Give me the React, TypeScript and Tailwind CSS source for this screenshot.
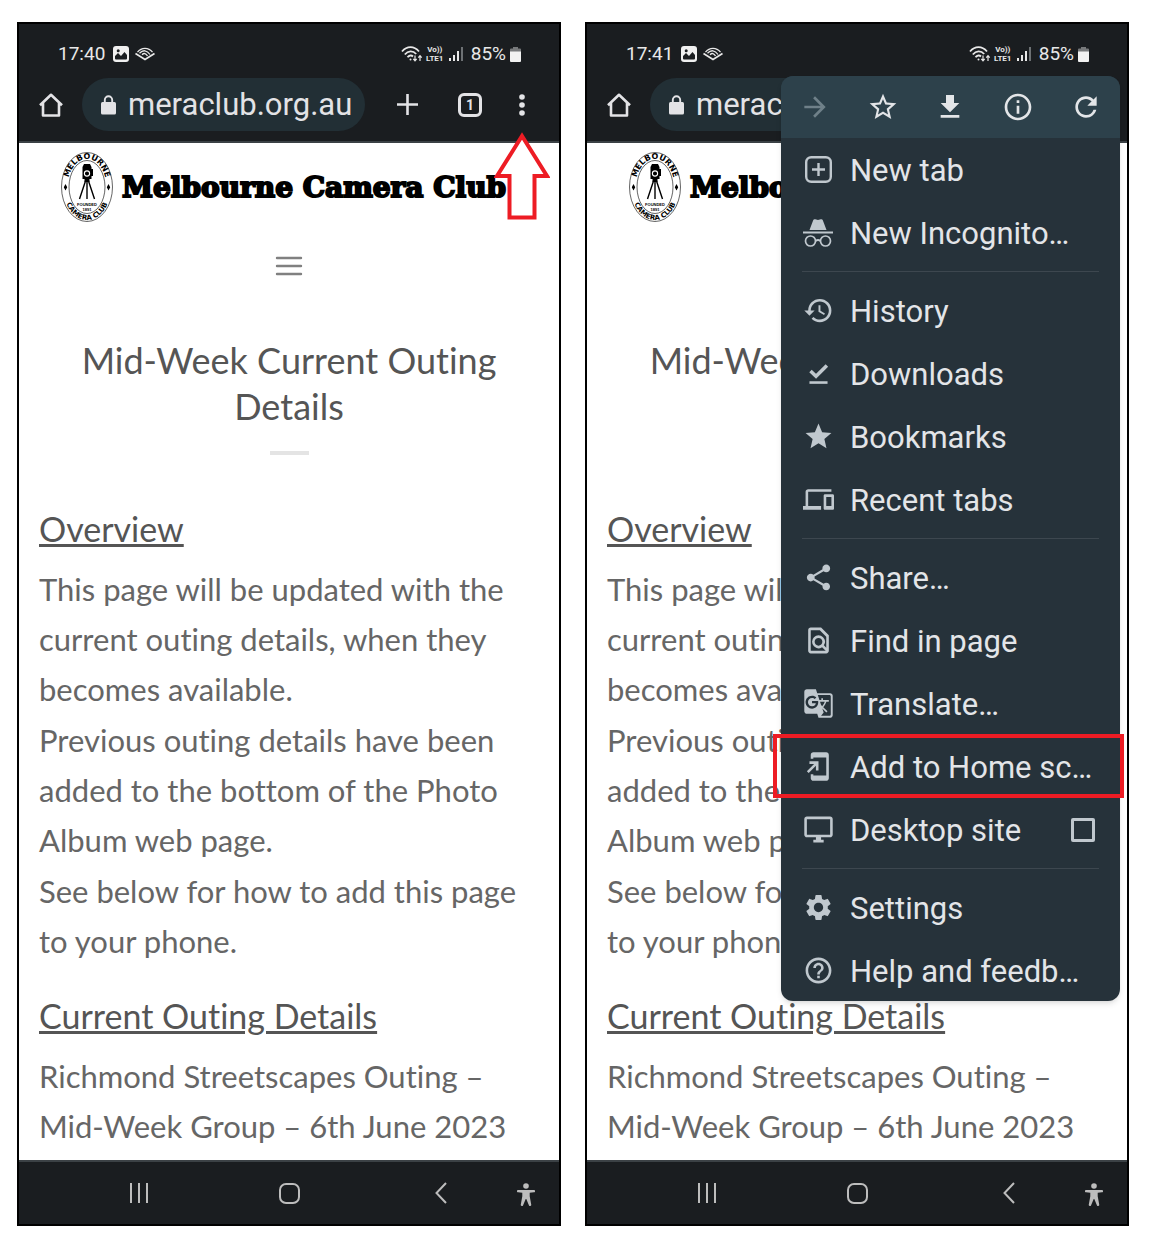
import { ReactNode, useId } from "react";
import {
    MdAddToHomeScreen,
    MdArrowForward,
    MdDevices,
    MdFileDownload,
    MdGTranslate,
    MdHelpOutline,
    MdHistory,
    MdInfoOutline,
    MdOutlineDesktopWindows,
    MdOutlineFindInPage,
    MdRefresh,
    MdSettings,
    MdShare,
    MdStar,
    MdStarBorder,
} from "react-icons/md";

export default function App() {
    return (
        <div className="grid grid-cols-2 gap-6 bg-white pt-[22px] pr-[35px] pb-7 pl-[17px]">
            <Phone time="17:40">
                <RedArrow />
            </Phone>
            <Phone time="17:41">
                <BrowserMenu />
            </Phone>
        </div>
    );
}

function Phone(phoneProps: IPhoneProps) {
    return (
        <section className="relative flex min-w-0 flex-col border-2 border-black bg-white">
            <header className="border-b-2 border-[#3b4145] bg-[#1a1d20] pb-[10px]">
                <StatusBar time={phoneProps.time} />
                <Toolbar />
            </header>
            <ClubPage />
            <NavBar />
            {phoneProps.children}
        </section>
    );
}

function StatusBar({ time }: { time: string }) {
    return (
        <div className="flex h-[54px] items-center pt-[6px] pr-[38px] pl-[39px] font-['Roboto',sans-serif] text-[19px] text-[#e8e8e8]">
            <span>{time}</span>
            {/* Picture notification */}
            <svg className="ml-2 h-4 w-4" viewBox="0 0 16 16">
                <rect width="16" height="16" rx="3" fill="#f0f0f0" />
                <path d="M2 12.500V10l3-3 3 3 3.500-4L14 9v3.500a1 1 0 0 1-1 1H3a1 1 0 0 1-1-1z" fill="#1a1d20" />
                <circle cx="5.200" cy="4.800" r="1.500" fill="#1a1d20" />
            </svg>
            {/* Audiobook notification */}
            <svg className="ml-1.5 h-[14px] w-5" viewBox="0 0 20 14" fill="none" stroke="#e8e8e8" strokeWidth="1.300">
                <path d="M.5 6.500 10 12.500l9.500-6" strokeWidth="1.700" />
                <path d="M2.500 5.200C6.500.2 13.500.2 17.500 5.200" />
                <path d="M4.500 6.300c3.500-3.800 7.500-3.300 10.500 1.200" />
                <path d="M7 7.700c2-2 4-1.500 5.500 1.300" />
            </svg>
            <svg className="ml-auto h-4 w-[22px]" viewBox="0 0 22 16" fill="none" stroke="#e8e8e8" strokeWidth="1.800">
                <path d="M1 5.500C6-.3 13-.3 18 5.500" />
                <path d="M3.800 8.500c3.300-4 8.200-4 11.400-.5" />
                <path d="M6.500 11.300c1.700-2.200 4-2.300 5.500-.8" />
                <circle cx="9.500" cy="13.500" r="1" fill="#e8e8e8" stroke="none" />
                <path d="M14 9.500v5M12.300 12.800l1.700 2 1.700-2M19 15v-5M17.300 11.700l1.700-2 1.700 2" strokeWidth="1.200" />
            </svg>
            <span className="ml-0.5 flex w-5 flex-col text-center text-[8px] leading-[9px] font-bold">
                <span>Vo))</span>
                <span>LTE1</span>
            </span>
            <svg className="ml-1 h-[14px] w-[14px]" viewBox="0 0 14 14" fill="#e8e8e8">
                <path d="M0 11h2v3H0zM4 8h2v6H4zM8 4h2v10H8z" />
                <path d="M12 0h2v14h-2z" fill="#6d7174" />
            </svg>
            <span className="ml-2">85%</span>
            <svg className="ml-1 h-[15px] w-[11px]" viewBox="0 0 11 15">
                <path d="M3 0h5v1.500h2a1 1 0 0 1 1 1V5H0V2.500a1 1 0 0 1 1-1h2z" fill="#77797b" />
                <path d="M0 4.500h11V14a1 1 0 0 1-1 1H1a1 1 0 0 1-1-1z" fill="#f2f2f2" />
            </svg>
        </div>
    );
}

function Toolbar() {
    return (
        <div className="flex items-center pr-[34px] pl-5 font-['Roboto',sans-serif] text-[#e3e3e6]">
            <button type="button" aria-label="Home">
                <svg className="h-6 w-6" viewBox="0 0 24 24" fill="none" stroke="currentColor" strokeWidth="2.600">
                    <path d="M1 12.200 12 1.800l11 10.400M4 9.800V22.500h16V9.800" strokeLinejoin="round" />
                </svg>
            </button>
            <button
                type="button"
                className="ml-[19px] flex h-[53px] min-w-0 flex-1 items-center overflow-hidden rounded-full bg-[#222f35] pl-[19px]"
            >
                <svg className="h-5 w-[15px] shrink-0" viewBox="0 0 15 20">
                    <path d="M3.800 9V5a3.700 3.700 0 0 1 7.400 0v4" fill="none" stroke="currentColor" strokeWidth="1.900" />
                    <rect y="7" width="15" height="12.500" rx="1.500" fill="currentColor" />
                </svg>
                <span className="ml-3 text-[31px] leading-[38px]">meraclub.org.au</span>
            </button>
            <button type="button" aria-label="New tab" className="ml-8">
                <svg className="h-[21px] w-[21px]" viewBox="0 0 21 21" stroke="currentColor" strokeWidth="2.600">
                    <path d="M10.500 0v21M0 10.500h21" />
                </svg>
            </button>
            <button
                type="button"
                aria-label="Tabs"
                className="ml-10 h-6 w-6 rounded-md border-[3px] border-current text-sm leading-[18px] font-bold"
            >
                1
            </button>
            <button type="button" aria-label="More" className="ml-[37px]">
                <svg className="h-[22px] w-1.5" viewBox="0 0 6 22" fill="currentColor">
                    <circle cx="3" cy="3" r="2.800" />
                    <circle cx="3" cy="11" r="2.800" />
                    <circle cx="3" cy="19" r="2.800" />
                </svg>
            </button>
        </div>
    );
}

function ClubPage() {
    return (
        <main className="px-5 pt-[9px] pb-[9px] font-['Lato',sans-serif] text-[31px] leading-[50px] text-[#666] [font-variant-ligatures:none]">
            <a href="#" className="ml-[22px] flex items-center gap-[9px] text-black">
                <ClubLogo />
                <span className="pt-0.5 font-['DejaVu_Serif',serif] text-[28px] leading-8 font-bold whitespace-nowrap [-webkit-text-stroke:2px_black]">
                    Melbourne Camera Club
                </span>
            </a>
            <button type="button" aria-label="Menu" className="mx-auto mt-[34px] block">
                <svg className="h-5 w-7" viewBox="0 0 28 20" stroke="#808080" strokeWidth="2.400" strokeLinecap="round">
                    <path d="M2 2h24M2 10h24M2 18h24" />
                </svg>
            </button>
            <h1 className="mt-[61px] text-center text-[36px] leading-[46px] text-[#555]">Mid-Week Current Outing Details</h1>
            <div className="mx-auto mt-[22px] h-1 w-[39px] bg-[#e4e4e4]"></div>
            <h2 className="mt-[49px] text-[34px] text-[#555] underline decoration-[3px]">Overview</h2>
            <div className="mt-[10px] flex flex-col gap-px">
                <p>This page will be updated with the current outing details, when they becomes available.</p>
                <p>Previous outing details have been added to the bottom of the Photo Album web page.</p>
                <p>See below for how to add this page to your phone.</p>
            </div>
            <h2 className="mt-[25px] text-[34px] text-[#555] underline decoration-[3px]">Current Outing Details</h2>
            <p className="mt-[10px]">Richmond Streetscapes Outing – Mid-Week Group – 6th June 2023</p>
        </main>
    );
}

function ClubLogo() {
    const id = useId();

    return (
        <svg className="h-[70px] w-[52px] shrink-0" viewBox="0 0 52 70" fontFamily="Liberation Sans, sans-serif">
            <ellipse cx="26" cy="35" rx="25.500" ry="34.500" fill="none" stroke="#222" strokeWidth=".7" />
            <ellipse cx="26" cy="35" rx="18" ry="26.500" fill="none" stroke="#222" strokeWidth=".7" />
            <path id={id + "top"} d="M6.500 35a19.500 28 0 0 1 39 0" fill="none" />
            <path id={id + "bottom"} d="M2 35a24 33 0 0 0 48 0" fill="none" />
            <text fontSize="8" fontFamily="DejaVu Sans" fontWeight="bold" textAnchor="middle">
                <textPath href={"#" + id + "top"} startOffset="50%">
                    MELBOURNE
                </textPath>
            </text>
            <text fontSize="7" fontFamily="DejaVu Sans" fontWeight="bold" textAnchor="middle">
                <textPath href={"#" + id + "bottom"} startOffset="50%">
                    CAMERA CLUB
                </textPath>
            </text>
            <path d="m4.500 32 1.700 3.200-1.700 3.200-1.700-3.200zM47.500 32l1.700 3.200-1.700 3.200-1.700-3.200z" />
            {/* Camera on its tripod */}
            <path d="M23 12h6l1.500 3v2h1.500v7h-1.500v3h-9V15z" />
            <circle cx="26" cy="21.500" r="2.600" stroke="#fff" strokeWidth="1.100" />
            <path d="M23.500 27h5v3h-5z" />
            <path d="M24.500 29 18.500 47M26 29v18M27.500 29l6 18" stroke="#000" strokeWidth="1.400" />
            <text x="26" y="53.500" fontSize="4" fontWeight="bold" textAnchor="middle">
                FOUNDED
            </text>
            <text x="26" y="58.500" fontSize="4" fontWeight="bold" textAnchor="middle">
                1891
            </text>
        </svg>
    );
}

function NavBar() {
    return (
        <nav className="flex h-16 border-t-2 border-[#3b4145] bg-[#1a1d20] pl-11 text-[#bdbdbd]">
            <button type="button" aria-label="Recents" className="flex flex-1 items-center justify-center">
                <svg className="h-5 w-5" viewBox="0 0 20 20" stroke="currentColor" strokeWidth="2">
                    <path d="M2 0v20M10 0v20M18 0v20" />
                </svg>
            </button>
            <button type="button" aria-label="Home" className="flex flex-1 items-center justify-center">
                <span className="h-[21px] w-[21px] rounded-[7px] border-2 border-current"></span>
            </button>
            <button type="button" aria-label="Back" className="flex flex-1 items-center justify-center">
                <svg className="h-[22px] w-3" viewBox="0 0 12 22" fill="none" stroke="currentColor" strokeWidth="2">
                    <path d="M11 1 1.500 11 11 21" />
                </svg>
            </button>
            <button type="button" aria-label="Accessibility" className="flex w-[42px] items-center">
                <svg className="mt-0.5 h-[23px] w-[18px]" viewBox="0 0 18 23" fill="currentColor">
                    <circle cx="9" cy="3" r="2.800" />
                    <path d="M1 7h16a1 1 0 0 1 0 2.200l-4.300.6v3.400L14.200 21.500a1.200 1.200 0 0 1-2.300.7L9.300 16h-.6L6.100 22.200a1.200 1.200 0 0 1-2.300-.7l1.500-8.300V9.800L1 9.200A1 1 0 0 1 1 7z" />
                </svg>
            </button>
        </nav>
    );
}

function RedArrow() {
    return (
        <svg className="absolute top-[108px] right-[9px] h-[90px] w-[56px]" viewBox="0 0 56 90">
            <path
                d="M28 4 53 44H40.500V85.500H15.500V44H3z"
                fill="#fff"
                stroke="#ed1c24"
                strokeWidth="4"
            />
        </svg>
    );
}

function NewTabIcon() {
    return (
        <svg className="h-[27px] w-[27px]" viewBox="0 0 27 27" fill="none" stroke="currentColor" strokeWidth="2.400">
            <rect x="1.200" y="1.200" width="24.600" height="24.600" rx="5" />
            <path d="M13.500 7v13M7 13.500h13" />
        </svg>
    );
}

function IncognitoIcon() {
    return (
        <svg className="h-[28px] w-[30px]" viewBox="0 0 30 28" fill="currentColor">
            <path d="M6.500 11 10.200 1.200C10.500.3 11.300 0 12.200.3L15 1.100l2.800-.8c.9-.3 1.700 0 2 .9L23.500 11z" />
            <path d="M0 12.500h30v2H0z" />
            <g fill="none" stroke="currentColor" strokeWidth="1.700">
                <circle cx="7.500" cy="22" r="5" />
                <circle cx="22.500" cy="22" r="5" />
                <path d="M12.500 22c1.500-1.200 3.500-1.200 5 0" />
            </g>
        </svg>
    );
}

function DownloadsIcon() {
    return (
        <svg className="h-[31px] w-[31px]" viewBox="0 0 24 24" fill="none" stroke="currentColor">
            <path d="m5.800 10 4.300 4.200 8.400-8.400" strokeWidth="2.700" />
            <path d="M5 19h14" strokeWidth="2" />
        </svg>
    );
}

const menuGroups: IMenuItem[][] = [
    [
        { label: "New tab", icon: <NewTabIcon /> },
        { label: "New Incognito…", icon: <IncognitoIcon /> },
    ],
    [
        { label: "History", icon: <MdHistory /> },
        { label: "Downloads", icon: <DownloadsIcon /> },
        { label: "Bookmarks", icon: <MdStar /> },
        { label: "Recent tabs", icon: <MdDevices /> },
    ],
    [
        { label: "Share…", icon: <MdShare /> },
        { label: "Find in page", icon: <MdOutlineFindInPage /> },
        { label: "Translate…", icon: <MdGTranslate /> },
        { label: "Add to Home sc…", icon: <MdAddToHomeScreen />, highlighted: true },
        { label: "Desktop site", icon: <MdOutlineDesktopWindows />, checkbox: true },
    ],
    [
        { label: "Settings", icon: <MdSettings /> },
        { label: "Help and feedb…", icon: <MdHelpOutline /> },
    ],
];

function BrowserMenu() {
    return (
        <div className="absolute top-[52px] right-[7px] flex w-[339px] flex-col rounded-xl bg-[#26323a] font-['Roboto',sans-serif] text-[31px] text-[#e3e5e8] shadow-md">
            <div className="grid h-[62px] grid-cols-5 place-items-center rounded-t-xl bg-[#2d414b] text-[32px]">
                <button type="button" aria-label="Forward" className="text-[#6f8089]" disabled>
                    <MdArrowForward />
                </button>
                <button type="button" aria-label="Bookmark">
                    <MdStarBorder />
                </button>
                <button type="button" aria-label="Download">
                    <MdFileDownload />
                </button>
                <button type="button" aria-label="Page info">
                    <MdInfoOutline />
                </button>
                <button type="button" aria-label="Reload">
                    <MdRefresh />
                </button>
            </div>
            <div className="-mb-px flex flex-col">
                {menuGroups.map((group, index) => {
                    return (
                        <div key={index}>
                            {index > 0 && <hr className="mx-[21px] my-[7px] border-[#3d474f]" />}
                            {group.map((item) => {
                                return <MenuRow key={item.label} {...item} />;
                            })}
                        </div>
                    );
                })}
            </div>
        </div>
    );
}

function MenuRow(item: IMenuItem) {
    const content = (
        <>
            <span className="flex w-8 shrink-0 justify-center text-[#c0c8ce]">{item.icon}</span>
            <span className="pt-1 whitespace-nowrap">{item.label}</span>
        </>
    );

    if (item.checkbox) {
        return (
            <label className="flex h-[63px] items-center gap-4 pr-[25px] pl-[21px]">
                {content}
                <input type="checkbox" className="ml-auto h-6 w-6 appearance-none rounded-xs border-[3px] border-[#c0c8ce]" />
            </label>
        );
    }

    return (
        <button type="button" className="relative flex h-[63px] w-full items-center gap-4 pl-[21px] text-left">
            {content}
            {item.highlighted && (
                <span className="absolute -top-px -right-1 bottom-0 -left-2 border-4 border-[#ed1c24]"></span>
            )}
        </button>
    );
}

interface IPhoneProps {
    time: string;
    children: ReactNode;
}

interface IMenuItem {
    label: string;
    icon: ReactNode;
    highlighted?: boolean;
    checkbox?: boolean;
}
